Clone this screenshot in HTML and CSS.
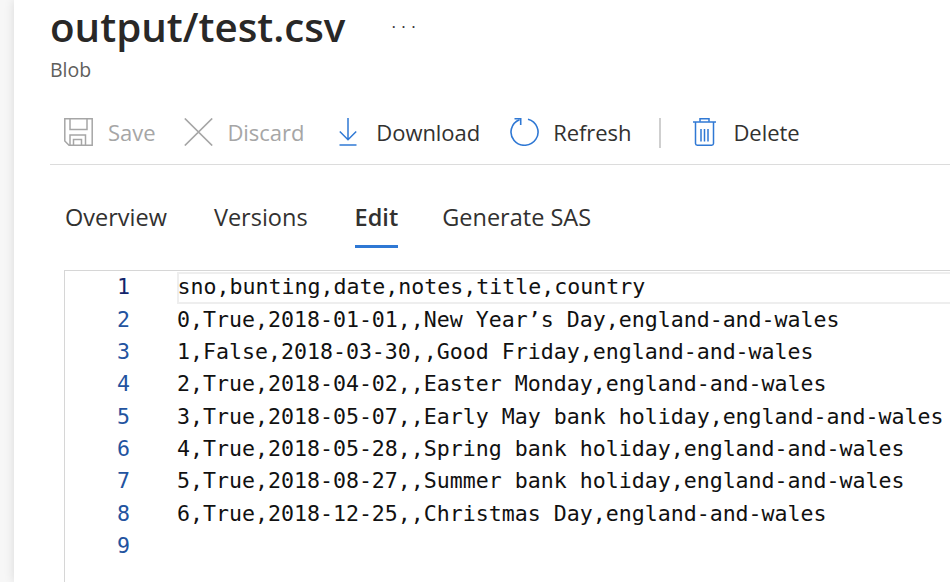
FILE: index.html
```html
<!DOCTYPE html>
<html lang="en">
<head>
<meta charset="utf-8">
<title>output/test.csv</title>
<link rel="stylesheet" href="styles.css">
</head>
<body>
<main class="panel">
  <header class="head">
    <div class="title-row">
      <h1 class="title">output/test.csv</h1>
      <span class="more">···</span>
    </div>
    <div class="subtitle">Blob</div>
  </header>
  <div class="toolbar">
    <button class="tool disabled save">
      <svg class="icon" width="29" height="28" viewBox="0 0 29 28" fill="none" stroke="#a6a6a6" stroke-width="1.5"><path d="M0.800 0.800H28.200V27.200H5L0.800 23Z"/><path d="M6 0.800V11.500H23V0.800"/><path d="M6 27.200V17H21.500V27.200"/><path d="M9.500 27.200V21.500H17.500V27.200"/></svg>
      <span>Save</span>
    </button>
    <button class="tool disabled discard">
      <svg class="icon" width="29" height="28" viewBox="0 0 29 28" fill="none" stroke="#a6a6a6" stroke-width="1.7"><path d="M0.800 0.500L28.200 27.500M28.200 0.500L0.800 27.500"/></svg>
      <span>Discard</span>
    </button>
    <button class="tool download">
      <svg class="icon" width="18" height="28" viewBox="0 0 18 28" fill="none" stroke="#2f78d4" stroke-width="1.5"><path d="M9 0V21.500M0.800 13.500L9 21.800L17.200 13.500"/><path d="M0.500 27H17.500"/></svg>
      <span>Download</span>
    </button>
    <button class="tool refresh">
      <svg class="icon" width="29" height="28" viewBox="0 0 29 28" fill="none" stroke="#2f78d4" stroke-width="1.6"><path d="M18 1.300A13.500 13.200 0 1 1 9.500 1.800"/><path d="M4.500 0.800H10.700V7"/></svg>
      <span>Refresh</span>
    </button>
    <span class="sep"></span>
    <button class="tool delete">
      <svg class="icon" width="23" height="28" viewBox="0 0 23 28" fill="none" stroke="#2f78d4" stroke-width="1.5"><path d="M0 4H23"/><path d="M7 3.800V0.800H16V3.800"/><path d="M2.500 4V25.500A1.800 1.800 0 0 0 4.300 27.200H18.700A1.800 1.800 0 0 0 20.500 25.500V4"/><path d="M8 11V23.500M11.500 11V23.500M15 11V23.500"/></svg>
      <span>Delete</span>
    </button>
  </div>
  <nav class="tabs">
    <a class="tab">Overview</a>
    <a class="tab">Versions</a>
    <a class="tab active">Edit</a>
    <a class="tab">Generate SAS</a>
  </nav>
  <section class="editor">
    <div class="line current"><span class="num">1</span><span class="code">sno,bunting,date,notes,title,country</span></div>
    <div class="line"><span class="num">2</span><span class="code">0,True,2018-01-01,,New Year’s Day,england-and-wales</span></div>
    <div class="line"><span class="num">3</span><span class="code">1,False,2018-03-30,,Good Friday,england-and-wales</span></div>
    <div class="line"><span class="num">4</span><span class="code">2,True,2018-04-02,,Easter Monday,england-and-wales</span></div>
    <div class="line"><span class="num">5</span><span class="code">3,True,2018-05-07,,Early May bank holiday,england-and-wales</span></div>
    <div class="line"><span class="num">6</span><span class="code">4,True,2018-05-28,,Spring bank holiday,england-and-wales</span></div>
    <div class="line"><span class="num">7</span><span class="code">5,True,2018-08-27,,Summer bank holiday,england-and-wales</span></div>
    <div class="line"><span class="num">8</span><span class="code">6,True,2018-12-25,,Christmas Day,england-and-wales</span></div>
    <div class="line"><span class="num">9</span><span class="code"></span></div>
  </section>
</main>
</body>
</html>
```

FILE: styles.css
```css
* { box-sizing: border-box; }
html, body { margin: 0; height: 100%; overflow: hidden; background: #f7f7f7; }
body { font-family: "Open Sans", "Noto Sans", sans-serif; color: #323130; }

.panel {
  margin-left: 14px;
  height: 582px;
  background: #fff;
  box-shadow: 0 0 10px rgba(0, 0, 0, 0.12);
  overflow: hidden;
  padding-left: 36px;
}

.head { height: 105px; }
.title-row { display: flex; align-items: center; height: 53px; }
.title {
  margin: 0;
  font-size: 40.300px;
  font-weight: 600;
  line-height: 53px;
  color: #292827;
}
.more {
  margin: 0 0 0 46px;
  font-size: 17px;
  line-height: 17px;
  letter-spacing: 5.500px;
  color: #333;
}
.subtitle { margin-top: 4px; font-size: 19.500px; line-height: 26px; color: #605e5c; }

.toolbar {
  display: flex;
  align-items: center;
  height: 60px;
  padding: 0 0 4px 14px;
  border-bottom: 1.500px solid #dcdcdc;
}
.tool {
  display: flex;
  align-items: center;
  padding: 0;
  border: 0;
  background: none;
  font: inherit;
  font-size: 22px;
  letter-spacing: -0.05px;
  color: #323130;
  height: 50px;
}
.tool span { margin-bottom: 2px; }
.tool.disabled { color: #a6a6a6; }
.icon { margin-bottom: 2px; flex: none; }
.save .icon { margin-right: 15px; }
.save { margin-right: 29px; }
.discard .icon { margin-right: 14px; }
.discard { margin-right: 35px; }
.download .icon { margin-right: 19px; }
.download { margin-right: 30px; }
.refresh .icon { margin-right: 14px; }
.sep { width: 2px; height: 30px; margin: 0 32px 0 28px; background: #cfcfcf; }
.delete .icon { margin-right: 17px; }

.tabs { display: flex; gap: 47px; height: 105px; padding: 31px 0 0 15px; }
.tab {
  height: 52px;
  font-size: 23.500px;
  line-height: 42px;
  color: #323130;
  border-bottom: 3px solid transparent;
}
.tab.active { font-weight: 600; border-bottom-color: #2f78d4; margin-right: -3px; }

.editor {
  margin-left: 14px;
  height: 330px;
  padding-top: 0.500px;
  border: 1.500px solid #d6d6d6;
  border-right: 0;
  border-bottom: 0;
  font-family: "DejaVu Sans Mono", "Liberation Mono", monospace;
  font-size: 21.580px;
}
.line { display: flex; height: 32.300px; line-height: 32.300px; white-space: pre; }
.num { width: 65px; text-align: right; color: #23539f; flex: none; }
.code { margin-left: 47px; flex: 1; color: #111; }
.line.current .num { color: #12246b; line-height: 30.500px; }
.line.current .code { border: 2.500px solid #eeeeee; border-right: 0; line-height: 25.500px; text-indent: -1.500px; }
```
